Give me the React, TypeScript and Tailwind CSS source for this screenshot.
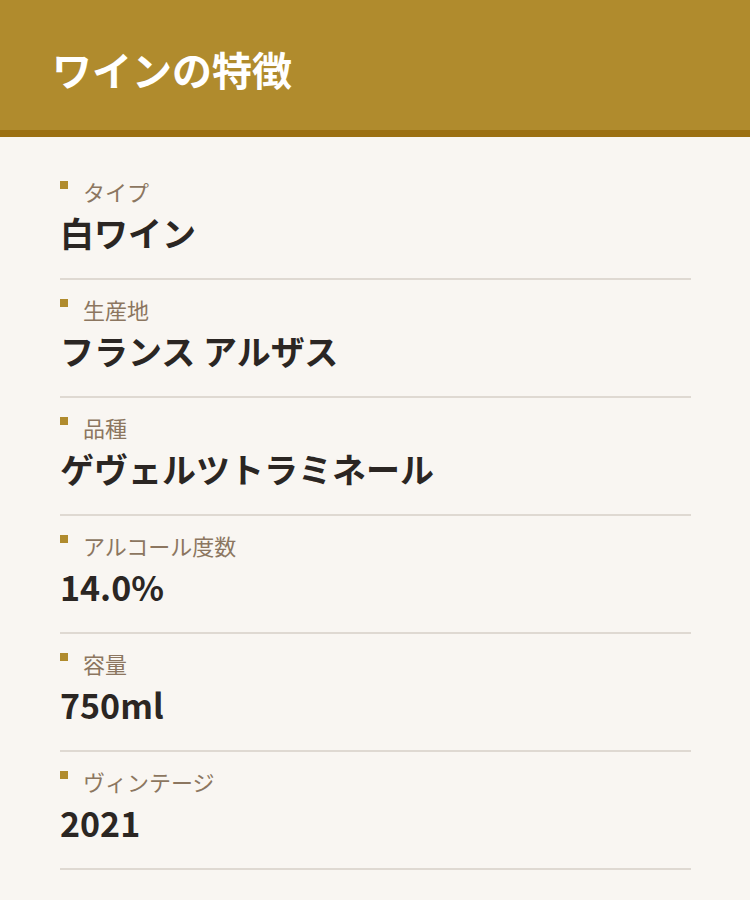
import React from "react";

const specs = [
  { label: "タイプ", value: "白ワイン" },
  { label: "生産地", value: "フランス アルザス" },
  { label: "品種", value: "ゲヴェルツトラミネール" },
  { label: "アルコール度数", value: "14.0%" },
  { label: "容量", value: "750ml" },
  { label: "ヴィンテージ", value: "2021" },
];

export default function App() {
  return (
    <div
      className="min-h-[900px] w-[750px] bg-[#f9f6f2]"
      style={{ fontFamily: '"Noto Sans CJK JP", "Noto Sans", sans-serif' }}
    >
      <div className="flex h-[137px] items-center border-b-[7px] border-[#9c7012] bg-[#b08b2d] px-[52px] pt-[8px]">
        <h1 className="text-[40px] font-bold leading-none text-white">ワインの特徴</h1>
      </div>
      <ul className="px-[60px] pr-[59px] pt-[25px]">
        {specs.map((s) => (
          <li key={s.label} className="border-b-2 border-[#dfd9d2] pt-[14px] pb-[23px]">
            <div className="flex items-start gap-[15px]">
              <span className="mt-[5px] h-[8px] w-[8px] shrink-0 bg-[#b08b2d]" />
              <span className="text-[22px] leading-[30px] text-[#8c7660]">{s.label}</span>
            </div>
            <div className="mt-[5px] text-[34px] font-bold leading-[44px] text-[#2b2623]">{s.value}</div>
          </li>
        ))}
      </ul>
    </div>
  );
}
